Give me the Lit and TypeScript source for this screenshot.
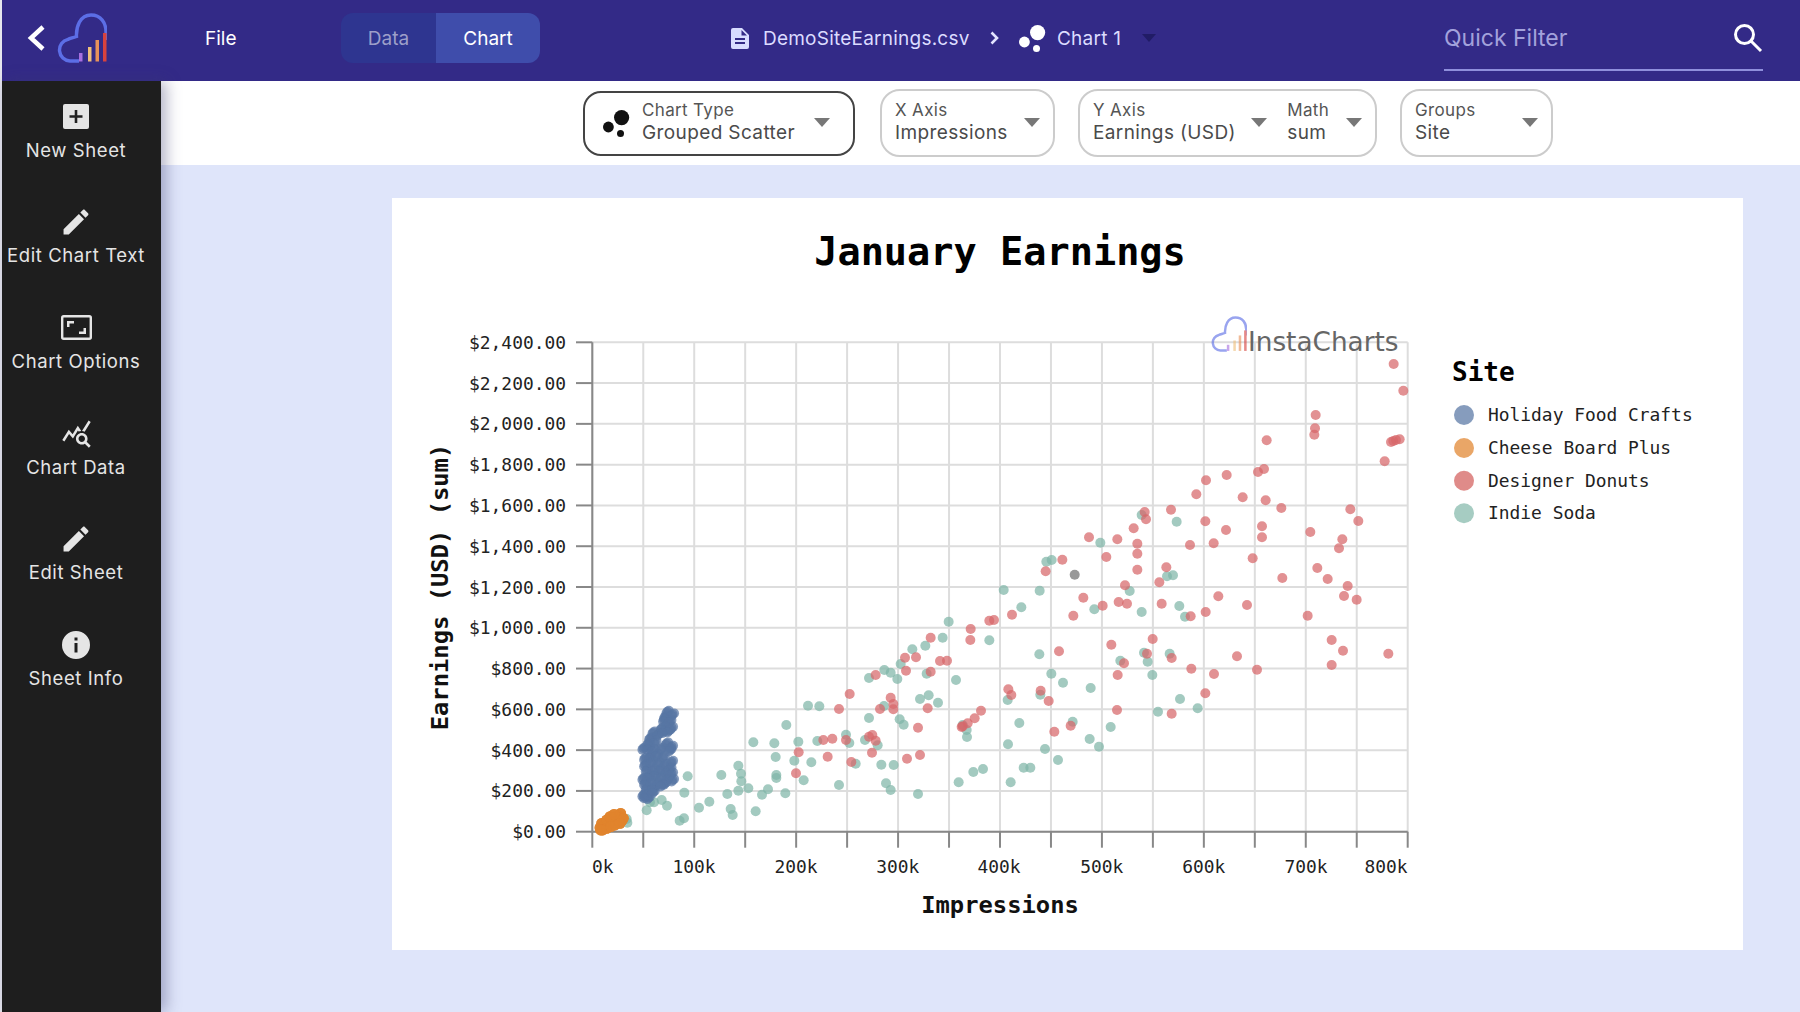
import { LitElement, html, css, svg } from "lit";
import { customElement } from "lit/decorators.js";

type P = [number, number];
const z = (ox: number, oy: number, pts: number[][]): P[] => pts.map(([x, y]) => [ox + x / 3, oy + y / 3]);

const teal: P[] = [
  ...z(420, 620, [[680,571],[690,547],[702,547],[725,540],[741,557],[779,602],[792,595],[793,518],[803,469],[837,563],[868,545],[904,465],[922,522],[932,567],[938,585],[955,437],[963,461],[964,484],[955,512],[985,505],[1007,574],[1026,524],[1044,508],[1000,367],[1063,370],[1067,411],[1069,465],[1069,474],[1096,520],[1099,315],[1123,422],[1135,365],[1151,481],[1164,257],[1198,259],[1174,427],[1192,363],[1257,495],[1278,344],[1288,369],[1307,431],[1335,360],[1347,294],[1347,174],[1373,376],[1384,434],[1392,258],[1393,150],[1398,490],[1412,158],[1412,510],[1421,435],[1432,177],[1439,298],[1442,132],[1451,314],[1477,88],[1494,522],[1500,237],[620,597],[622,608]]),
  ...z(920, 320, [[665,585],[770,605],[541,668],[379,725],[395,720],[741,769],[759,766],[629,813],[251,810],[359,812],[304,862],[523,868],[665,876],[778,858],[795,890],[86,905]]),
  ...z(920, 620, [[68,53],[16,77],[208,61],[358,103],[20,161],[108,180],[394,161],[429,188],[512,204],[672,98],[749,101],[683,125],[601,122],[697,165],[26,226],[54,248],[263,240],[361,224],[780,237],[833,265],[714,275],[458,305],[298,309],[128,315],[140,330],[141,351],[572,321],[509,357],[537,380],[264,373],[375,387],[414,420],[311,443],[331,443],[189,447],[160,456],[116,487],[272,487]]),
];
const red: P[] = [
  ...z(420, 620, [[1128,460],[1136,397],[1210,360],[1223,410],[1237,356],[1257,267],[1278,360],[1289,222],[1294,426],[1347,350],[1357,345],[1356,398],[1367,165],[1367,362],[1380,267],[1412,233],[1420,252],[1420,268],[1455,113],[1458,152],[1461,416],[1488,112],[1494,323],[1500,405]]),
  ...z(920, 320, [[1421,132],[1450,212],[1187,285],[1185,325],[1183,344],[1040,361],[1413,366],[1420,363],[1428,360],[1439,358],[1394,424],[1032,447],[1014,456],[858,481],[920,465],[829,523],[968,532],[1037,541],[1084,564],[1291,568],[753,569],[674,576],[678,598],[1315,603],[856,604],[641,625],[918,630],[1026,619],[1026,652],[1171,636],[1267,658],[592,658],[507,652],[652,671],[810,675],[881,670],[1257,685],[652,701],[559,711],[998,715],[427,719],[377,754],[739,742],[652,749],[1192,744],[1087,774],[1223,777],[718,787],[615,796],[1283,798],[1272,828],[1310,839],[895,829],[490,833],[596,846],[621,851],[548,857],[725,851],[981,855],[276,884],[460,887],[857,876],[812,889],[1163,887],[208,902],[222,900]]),
  ...z(920, 620, [[152,27],[151,60],[32,53],[60,123],[81,122],[32,155],[417,94],[574,74],[698,57],[681,101],[755,114],[612,130],[593,165],[814,146],[882,162],[951,109],[1011,149],[1235,60],[1269,92],[1235,135],[1405,101],[265,208],[274,225],[362,212],[386,243],[183,272],[23,265],[164,295],[143,310],[125,321],[128,319],[591,270],[755,281],[856,220],[403,335],[452,317]]),
];
const blueBase: P[] = z(590, 695, [[232,50],[248,58],[225,65],[222,75],[240,78],[230,90],[245,98],[215,100],[235,108],[190,112],[205,118],[220,110],[180,130],[175,145],[195,140],[230,145],[245,155],[160,160],[175,160],[190,165],[215,160],[240,165],[165,190],[180,185],[200,180],[220,185],[245,200],[165,210],[185,200],[205,205],[225,210],[240,220],[170,225],[190,225],[210,225],[230,230],[245,235],[160,250],[175,245],[195,240],[215,245],[235,250],[165,265],[185,260],[205,265],[225,265],[248,255],[170,280],[190,280],[215,270],[160,300],[175,295],[190,290],[175,308],[165,305]]);
const blue: P[] = [...blueBase, ...blueBase.map(([x, y]): P => [x + 1.5, y - 1]), ...blueBase.map(([x, y]): P => [x - 1, y + 1.5])];
const orangeBase: P[] = z(590, 695, [[30,398],[40,395],[35,385],[45,385],[55,390],[50,375],[60,378],[70,382],[65,368],[75,365],[85,362],[92,355],[95,368],[85,378],[95,378],[100,370],[38,405],[50,400],[62,395],[75,390],[32,405],[60,365],[72,358],[90,385]]);
const orange: P[] = [...orangeBase, ...orangeBase, ...orangeBase];

const X0 = 592.3, X1 = 1407.7, Y0 = 831.7, Y1 = 342.3;
const xStep = (X1 - X0) / 16, yStep = (Y0 - Y1) / 12;
const yLabels = ["$0.00","$200.00","$400.00","$600.00","$800.00","$1,000.00","$1,200.00","$1,400.00","$1,600.00","$1,800.00","$2,000.00","$2,200.00","$2,400.00"];
const xLabels: [string, number][] = [["0k",602.7],["100k",694],["200k",796],["300k",897.7],["400k",999],["500k",1101.7],["600k",1203.7],["700k",1306],["800k",1386]];
const legend: [string, string, number][] = [["Holiday Food Crafts","c-blue",415],["Cheese Board Plus","c-orange",448],["Designer Donuts","c-red",480.7],["Indie Soda","c-teal",513.3]];

const logo = (x: number, y: number, s: number, cls: string) => svg`
  <svg class=${cls} x=${x} y=${y} width=${s} height=${s} viewBox="0 0 50 50">
    <path class="lg-cloud" d="M22 48H13A11 11 0 0 1 11 26.3C13 25.5 15 25 19.500 23.500C19 14 23 2 34 2C44 2 49 10 49 19V27"/>
    <rect class="lg-a" x="22" y="40" width="3.500" height="8.500"/>
    <rect class="lg-b" x="31" y="34" width="3.500" height="14.500"/>
    <rect class="lg-c" x="38.500" y="27" width="3.500" height="21.500"/>
    <rect class="lg-d" x="46" y="20" width="3.500" height="28.500"/>
  </svg>`;

const bubbles = (cls: string) => html`<svg class=${cls} width="27" height="27" viewBox="0 0 27 27"><circle cx="18.6" cy="7.6" r="7.6"/><circle cx="5.4" cy="17" r="5.4"/><circle cx="17.5" cy="23.4" r="3.5"/></svg>`;
const pencil = html`<svg class="ic" width="26" height="26" viewBox="2.6 2.6 18.8 18.8"><path d="M3 17.25V21h3.75L17.81 9.94l-3.75-3.75L3 17.25zM20.71 7.04c.39-.39.39-1.02 0-1.41l-2.34-2.34c-.39-.39-1.02-.39-1.41 0l-1.83 1.83 3.75 3.75 1.83-1.83z"/></svg>`;

@customElement("app-root")
export class AppRoot extends LitElement {
  static styles = css`
    :host { display: block; width: 1800px; height: 1012px; overflow: hidden; background: #e6e6ee; padding-left: 2px; box-sizing: border-box; font-family: Inter, "Noto Sans", sans-serif; }
    .header { display: flex; align-items: center; height: 81px; padding-bottom: 5px; box-sizing: border-box; background: #332a87; color: #fff; }
    .back { margin-left: 25px; width: 18px; height: 28px; }
    .back path { fill: none; stroke: #fff; stroke-width: 4.500; }
    .top-logo { margin-left: 12px; }
    .lg-cloud { fill: none; stroke: #5c6ee6; stroke-width: 3.400; }
    .lg-a { fill: #a76fe0; } .lg-b { fill: #efc07c; } .lg-c { fill: #e8925a; } .lg-d { fill: #d8423e; }
    .wm { opacity: .62; }
    .file { margin-left: 98px; font-size: 19px; width: 33px; }
    .toggle { display: flex; margin-left: 103px; height: 50px; border-radius: 12px; overflow: hidden; font-size: 19px; }
    .toggle div { display: flex; align-items: center; justify-content: center; }
    .t-data { width: 95px; background: #2e3590; color: #9d9fc9; }
    .t-chart { width: 104px; background: #3f4dab; color: #fff; }
    .doc { margin-left: 191px; fill: #d8dcff; }
    .crumb { font-size: 19px; color: #dcdcff; letter-spacing: .012em; white-space: nowrap; }
    .crumb.a { margin-left: 14px; width: 205px; }
    .sep { margin-left: 22px; fill: none; stroke: #e4e4ff; stroke-width: 2.600; }
    .b-white { margin-left: 20px; fill: #fff; }
    .crumb.b { margin-left: 11px; width: 67px; letter-spacing: .012em; }
    .caret-dark { margin-left: 18px; width: 0; height: 0; border-left: 7px solid transparent; border-right: 7px solid transparent; border-top: 8px solid #211c66; }
    .filter { margin-left: auto; margin-right: 37px; align-self: flex-start; margin-top: 20px; width: 319px; height: 36px; padding-bottom: 13px; border-bottom: 2px solid #8f8fdc; display: flex; align-items: center; justify-content: space-between; box-sizing: content-box; }
    .filter span { font-size: 23px; color: #a3a2dc; }
    .filter svg { fill: none; stroke: #fff; stroke-width: 3; }
    .body { display: flex; height: 931px; }
    .side { width: 159px; flex: none; background: #1e1e1e; box-shadow: 5px 0 14px rgba(60, 60, 110, .4); position: relative; z-index: 2; padding-right: 11px; box-sizing: border-box; }
    .item { height: 105.700px; box-sizing: border-box; padding-top: 19.500px; display: flex; flex-direction: column; align-items: center; color: #e5e5e5; font-size: 18.500px; letter-spacing: .6px; white-space: nowrap; }
    .ico { height: 32px; display: flex; align-items: center; justify-content: center; }
    .ic { fill: #e5e5e5; }
    .lbl { line-height: 22px; margin-top: 6px; }
    .plus { width: 26px; height: 25px; border-radius: 2px; background: #e5e5e5; position: relative; }
    .plus path { stroke: #222; stroke-width: 2.600; fill: none; }
    .stroke-o { fill: none; stroke: #e5e5e5; stroke-width: 2.400; }
    .content { flex: 1; display: flex; flex-direction: column; background: #dfe5fa; }
    .tools { height: 84px; flex: none; background: #fff; padding-left: 422px; display: flex; align-items: center; gap: 23px; box-sizing: border-box; }
    .sel { height: 68px; border: 2px solid #ccc; border-radius: 20px; display: flex; align-items: center; box-sizing: border-box; padding: 0 13px; color: #444; }
    .sel.focus { height: 65px; border-color: #444; border-radius: 18px; padding: 0 23px 0 18px; width: 272px; margin-right: 2px; }
    .field { display: flex; flex-direction: column; padding-bottom: 2px; white-space: nowrap; }
    .field small { font-size: 17px; line-height: 22px; color: #555; letter-spacing: .02em; }
    .field b { font-weight: 400; font-size: 19px; line-height: 24px; color: #4a4a4a; letter-spacing: .02em; }
    .b-black { fill: #111; margin-right: 12px; }
    .arrow { width: 0; height: 0; flex: none; border-left: 8px solid transparent; border-right: 8px solid transparent; border-top: 9px solid #777; margin-left: auto; margin-top: -1px; }
    .main { flex: 1; padding: 33px 0 0 231px; }
    .card { width: 1351px; height: 752px; background: #fff; }
    .card svg { display: block; }
    .grid { stroke: #ddd; stroke-width: 2; }
    .axis { stroke: #888; stroke-width: 2; }
    text { font-family: "DejaVu Sans Mono", "Liberation Mono", monospace; fill: #222; }
    .tk { font-size: 17.900px; }
    .end { text-anchor: end; }
    .mid { text-anchor: middle; }
    .title { font-size: 38.600px; font-weight: 700; fill: #000; }
    .ax-t { font-size: 23.800px; font-weight: 700; fill: #111; }
    .leg-t { font-size: 26px; font-weight: 700; fill: #000; }
    .wm-t { font-family: "DejaVu Sans", sans-serif; font-size: 26.300px; fill: #666; }
    .c-teal { fill: #83b8ab; } .c-red { fill: #d35e5c; } .c-blue { fill: #5876a4; } .c-orange { fill: #e1842c; }
    .dot { fill-opacity: .72; } .pt { fill-opacity: .72; } .c-grey { fill: #999; }
    .pt.c-teal { fill: #7fb5a8; } .pt.c-red { fill: #d7676a; }
  `;

  private dots(pts: P[], cls: string, r: number) {
    return pts.map(([x, y]) => svg`<circle class="pt ${cls}" cx=${x} cy=${y} r=${r}/>`);
  }

  private chart() {
    const xs = Array.from({ length: 17 }, (_, i) => X0 + i * xStep);
    const ys = Array.from({ length: 13 }, (_, i) => Y0 - i * yStep);
    return html`<svg width="1350" height="752" viewBox="392 198 1350 752">
      <text class="title mid" x="1000" y="265">January Earnings</text>
      ${ys.map((y) => svg`<line class="grid" x1=${X0} x2=${X1} y1=${y} y2=${y}/>`)}
      ${xs.map((x) => svg`<line class="grid" x1=${x} x2=${x} y1=${Y1} y2=${Y0}/>`)}
      ${ys.map((y) => svg`<line class="axis" x1="576" x2=${X0} y1=${y} y2=${y}/>`)}
      ${xs.map((x) => svg`<line class="axis" x1=${x} x2=${x} y1=${Y0} y2="847.7"/>`)}
      <line class="axis" x1=${X0} x2=${X0} y1=${Y1} y2=${Y0}/>
      <line class="axis" x1=${X0} x2=${X1} y1=${Y0} y2=${Y0}/>
      ${ys.map((y, i) => svg`<text class="tk end" x="566" y=${y + 6.5}>${yLabels[i]}</text>`)}
      ${xLabels.map(([t, x]) => svg`<text class="tk mid" x=${x} y="873">${t}</text>`)}
      <text class="ax-t mid" x="1000" y="913">Impressions</text>
      <text class="ax-t mid" transform="translate(448 587) rotate(-90)">Earnings (USD) (sum)</text>
      ${logo(1211, 316, 36, "wm")}
      <text class="wm-t" x="1248" y="351">InstaCharts</text>
      ${this.dots(teal, "c-teal", 5)}
      ${this.dots(red, "c-red", 5)}
      <circle class="c-grey" cx="1074.7" cy="574.7" r="5"/>
      ${this.dots(blue, "c-blue", 4.9)}
      ${this.dots(orange, "c-orange", 5.4)}
      <text class="leg-t" x="1452" y="381">Site</text>
      ${legend.map(([t, c, y]) => svg`<circle class="dot ${c}" cx="1464" cy=${y} r="10"/><text class="tk" x="1488" y=${y + 6}>${t}</text>`)}
    </svg>`;
  }

  render() {
    return html`
      <div class="header">
        <svg class="back" viewBox="0 0 18 28"><path d="M16 3L4 14l12 11"/></svg>
        <svg class="top-logo" width="50" height="50" viewBox="0 0 50 50">${logo(0, 0, 50, "")}</svg>
        <div class="file">File</div>
        <div class="toggle"><div class="t-data">Data</div><div class="t-chart">Chart</div></div>
        <svg class="doc" width="18" height="21" viewBox="0 0 18 21"><path fill-rule="evenodd" d="M2 0h9l7 7v12a2 2 0 0 1-2 2H2a2 2 0 0 1-2-2V2a2 2 0 0 1 2-2zm2 10v2h10v-2zm0 4v2h10v-2zM10.500 2v5.500H16z"/></svg>
        <div class="crumb a">DemoSiteEarnings.csv</div>
        <svg class="sep" width="9" height="14" viewBox="0 0 9 14"><path d="M1.500 1.500L7 7l-5.500 5.500"/></svg>
        ${bubbles("b-white")}
        <div class="crumb b">Chart 1</div>
        <div class="caret-dark"></div>
        <div class="filter"><span>Quick Filter</span>
          <svg width="30" height="30" viewBox="0 0 30 30"><circle cx="11.500" cy="11.500" r="9"/><path d="M18 18l10 10"/></svg>
        </div>
      </div>
      <div class="body">
        <div class="side">
          <div class="item"><div class="ico"><svg class="plus" viewBox="0 0 26 25"><path d="M13 6v13M6.500 12.500h13"/></svg></div><div class="lbl">New Sheet</div></div>
          <div class="item"><div class="ico">${pencil}</div><div class="lbl">Edit Chart Text</div></div>
          <div class="item"><div class="ico"><svg width="31" height="25" viewBox="0 0 31 25"><rect class="stroke-o" x="1.200" y="1.200" width="28.600" height="22.600" rx="1.500"/><path class="ic" d="M6 6h7v2.500H8.500V12H6zM25 19h-7v-2.500h4.500V13H25z"/></svg></div><div class="lbl">Chart Options</div></div>
          <div class="item"><div class="ico"><svg class="ic" width="31" height="31" viewBox="0 0 24 24"><path d="M19.880 18.470c.44-.7.7-1.510.7-2.390 0-2.490-2.010-4.500-4.500-4.500s-4.500 2.010-4.500 4.500 2.010 4.500 4.490 4.500c.88 0 1.700-.26 2.390-.7L21.580 23 23 21.580l-3.120-3.110zm-3.800.11c-1.380 0-2.500-1.120-2.500-2.500s1.120-2.500 2.500-2.500 2.500 1.120 2.500 2.500-1.120 2.500-2.500 2.500zm-.36-8.500c-.74.02-1.450.18-2.100.45l-.55-.83-3.800 6.180-3.010-3.520-3.630 5.810L1 17l5-8 3 3.500L13 6l2.720 4.080zm2.590.5c-.64-.28-1.330-.45-2.050-.49L21.370 2 23 3.180l-4.690 7.400z"/></svg></div><div class="lbl">Chart Data</div></div>
          <div class="item"><div class="ico">${pencil}</div><div class="lbl">Edit Sheet</div></div>
          <div class="item"><div class="ico"><svg width="28" height="28" viewBox="0 0 28 28"><path class="ic" fill-rule="evenodd" d="M14 0a14 14 0 1 1 0 28a14 14 0 0 1 0-28zM12.500 6.500v3h3v-3zM12.500 12v9.500h3V12z"/></svg></div><div class="lbl">Sheet Info</div></div>
        </div>
        <div class="content">
          <div class="tools">
            <div class="sel focus">${bubbles("b-black")}<div class="field"><small>Chart Type</small><b>Grouped Scatter</b></div><div class="arrow"></div></div>
            <div class="sel" style="width:175px"><div class="field"><small>X Axis</small><b>Impressions</b></div><div class="arrow"></div></div>
            <div class="sel" style="width:299px"><div class="field" style="width:159px"><small>Y Axis</small><b>Earnings (USD)</b></div><div class="arrow" style="margin-left:0"></div><div class="field" style="margin-left:20px;width:59px"><small>Math</small><b>sum</b></div><div class="arrow" style="margin-left:0"></div></div>
            <div class="sel" style="width:153px"><div class="field"><small>Groups</small><b>Site</b></div><div class="arrow"></div></div>
          </div>
          <div class="main"><div class="card">${this.chart()}</div></div>
        </div>
      </div>
    `;
  }
}
